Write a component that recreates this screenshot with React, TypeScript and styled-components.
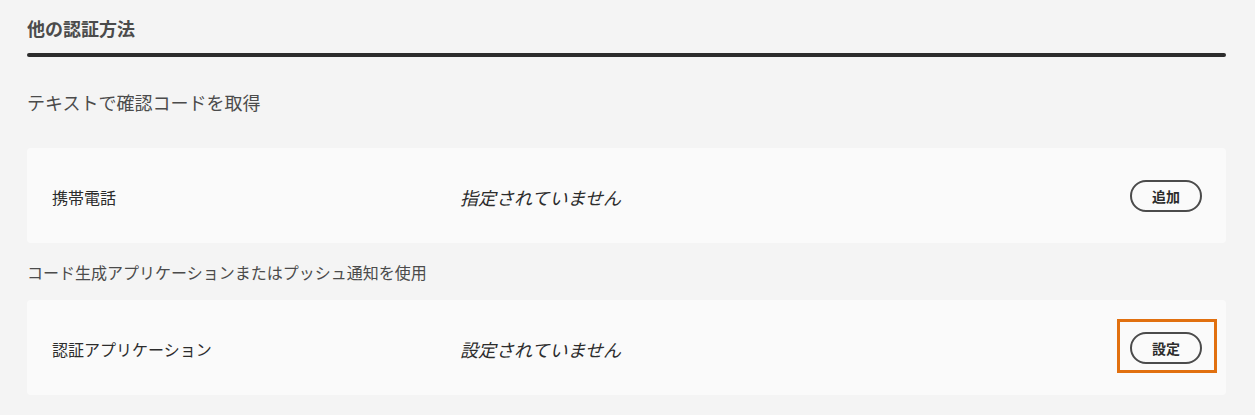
import React from "react";
import styled, { createGlobalStyle } from "styled-components";

const GlobalStyle = createGlobalStyle`
  html, body {
    margin: 0;
    padding: 0;
    background: #f4f4f4;
  }
  body {
    font-family: "Noto Sans CJK JP", "Noto Sans", sans-serif;
    color: #4b4b4b;
  }
`;

const Page = styled.div`
  display: flex;
  flex-direction: column;
  padding: 16px 29px 20px 27px;
`;

const Heading = styled.h2`
  margin: 0;
  font-size: 18px;
  line-height: 24px;
  font-weight: 700;
  color: #4b4b4b;
`;

const Rule = styled.div`
  margin-top: 13px;
  height: 4px;
  border-radius: 2px;
  background: #2c2c2c;
`;

const GroupLabel = styled.div<{ $size: number; $top: number; $gap: number }>`
  margin-top: ${(p) => p.$top}px;
  margin-bottom: ${(p) => p.$gap}px;
  font-size: ${(p) => p.$size}px;
  line-height: ${(p) => p.$size + 4}px;
  color: #4b4b4b;
`;

const Card = styled.div`
  display: grid;
  grid-template-columns: 408px 1fr auto;
  align-items: center;
  height: 95px;
  box-sizing: border-box;
  padding: 0 24px 0 25px;
  background: #fafafa;
  border-radius: 4px;
`;

const Label = styled.div`
  font-size: 16px;
  line-height: 20px;
  color: #2c2c2c;
  padding-top: 2px;
`;

const Value = styled.div`
  font-size: 18px;
  line-height: 24px;
  font-style: italic;
  color: #2c2c2c;
  padding-top: 2px;
`;

const Button = styled.button<{ $focused?: boolean }>`
  position: relative;
  height: 32px;
  padding: 0 20px;
  box-sizing: border-box;
  border: 2px solid #4b4b4b;
  border-radius: 16px;
  background: transparent;
  font-family: inherit;
  font-size: 14px;
  font-weight: 700;
  color: #2c2c2c;
  cursor: pointer;
  &::after {
    content: "";
    display: ${(p) => (p.$focused ? "block" : "none")};
    position: absolute;
    left: -15px;
    right: -17px;
    top: -15px;
    bottom: -11px;
    border: 3px solid #e1700f;
  }
`;

export default function App() {
  return (
    <>
      <GlobalStyle />
      <Page>
        <Heading>他の認証方法</Heading>
        <Rule />
        <GroupLabel $size={18} $top={34} $gap={35}>
          テキストで確認コードを取得
        </GroupLabel>
        <Card>
          <Label>携帯電話</Label>
          <Value>指定されていません</Value>
          <Button>追加</Button>
        </Card>
        <GroupLabel $size={16} $top={19} $gap={18}>
          コード生成アプリケーションまたはプッシュ通知を使用
        </GroupLabel>
        <Card>
          <Label>認証アプリケーション</Label>
          <Value>設定されていません</Value>
          <Button $focused>設定</Button>
        </Card>
      </Page>
    </>
  );
}
